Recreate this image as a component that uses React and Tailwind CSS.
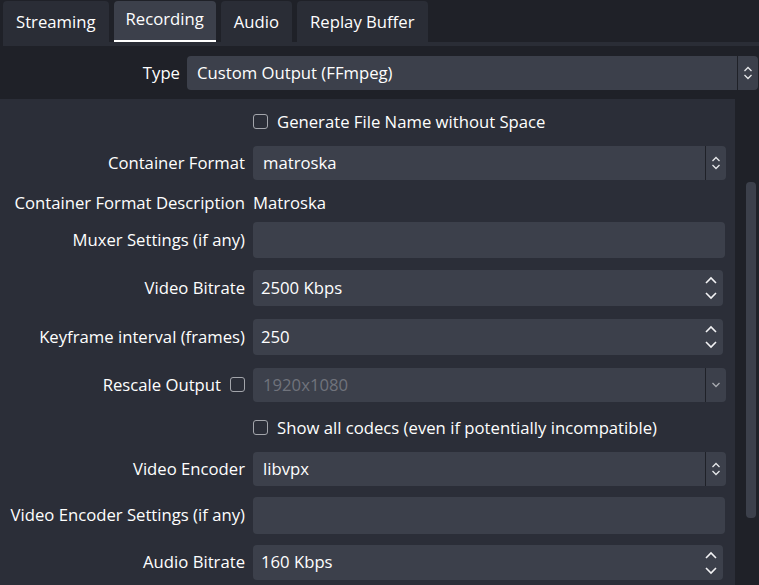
import React from 'react';

const FONT = { fontFamily: '"Open Sans", "Noto Sans", "Liberation Sans", sans-serif' };

// small up/down chevrons used in combo boxes
const ComboArrows = () => (
  <svg width="10" height="16" viewBox="0 0 10 16" fill="none" stroke="#e6e7ea" strokeWidth="1.3">
    <path d="M1.5 6 L5 2.5 L8.5 6" />
    <path d="M1.5 10 L5 13.5 L8.5 10" />
  </svg>
);

const SpinArrows = () => (
  <svg width="14" height="26" viewBox="0 0 14 26" fill="none" stroke="#f2f2f4" strokeWidth="1.6">
    <path d="M2 8 L7 3 L12 8" />
    <path d="M2 18 L7 23 L12 18" />
  </svg>
);

const DownArrow = () => (
  <svg width="10" height="8" viewBox="0 0 10 8" fill="none" stroke="#a9abb1" strokeWidth="1.3">
    <path d="M1.5 2 L5 5.5 L8.5 2" />
  </svg>
);

const Checkbox = () => (
  <div className="w-[15px] h-[15px] rounded-[3px] border-[1.5px] border-[#a3a5ab] shrink-0" />
);

const Combo = ({ value, disabled, single, w = 'w-[473px]', h = 'h-[34px]' }) => (
  <div className={`${w} ${h} flex rounded-[4px] bg-[#3c404b]`}>
    <div className={`flex-1 flex items-center pl-[10px] ${disabled ? 'text-[#70737c]' : ''}`}>{value}</div>
    <div className="w-[1px] bg-[#1f2128]" />
    <div className="w-[20px] flex items-center justify-center">
      {single ? <DownArrow /> : <ComboArrows />}
    </div>
  </div>
);

const Spin = ({ value, h = 'h-[36px]' }) => (
  <div className={`w-[470px] ${h} flex items-center rounded-[4px] bg-[#3c404b]`}>
    <div className="flex-1 pl-[8px]">{value}</div>
    <div className="w-[24px] flex items-center justify-center">
      <SpinArrows />
    </div>
  </div>
);

const TextInput = ({ h = 'h-[36px]' }) => (
  <div className={`w-[472px] ${h} rounded-[4px] bg-[#3c404b]`} />
);

const Row = ({ label, children, className = '' }) => (
  <div className={`flex items-center ${className}`}>
    <div className="w-[245px] flex justify-end items-center gap-[9px] shrink-0 whitespace-nowrap">{label}</div>
    <div className="ml-[8px] flex items-center whitespace-nowrap">{children}</div>
  </div>
);

const TABS = ['Streaming', 'Recording', 'Audio', 'Replay Buffer'];

export default function App() {
  return (
    <div className="w-[759px] h-[585px] overflow-hidden bg-[#1f2128] text-[#fefefe] text-[16.7px] leading-none" style={FONT}>
      {/* tab bar */}
      <div className="flex gap-[5px] pl-[3px] pt-[1px] h-[42px]">
        {TABS.map((t) => (
          <div
            key={t}
            className={`h-[41px] flex items-center rounded-t-[4px] ${
              t === 'Recording'
                ? 'px-[12px] bg-[#3c404b] border-b-2 border-white pb-[2px]'
                : 'px-[13px] bg-[#2a2d36] pt-[2px]'
            }`}
          >
            {t}
          </div>
        ))}
      </div>
      <div className="ml-[3px] h-[4px] bg-[#2a2d36]" />

      {/* output type */}
      <div className="flex items-center h-[53px] pt-[1px]">
        <div className="w-[180px] flex justify-end">Type</div>
        <div className="ml-[7px]">
          <Combo value="Custom Output (FFmpeg)" w="w-[571px]" />
        </div>
      </div>

      {/* scroll area */}
      <div className="flex h-[486px]">
        <div className="w-[735px] bg-[#2b2e38] flex flex-col pt-[8px]">
          <Row label={null} className="h-[30px]">
            <div className="flex items-center gap-[9px]">
              <Checkbox />
              <span>Generate File Name without Space</span>
            </div>
          </Row>
          <Row label="Container Format" className="mt-[9px]">
            <Combo value="matroska" />
          </Row>
          <Row label="Container Format Description" className="mt-[9px] h-[28px]">
            <span>Matroska</span>
          </Row>
          <Row label="Muxer Settings (if any)" className="mt-[5px]">
            <TextInput />
          </Row>
          <Row label="Video Bitrate" className="mt-[12px]">
            <Spin value="2500 Kbps" />
          </Row>
          <Row label="Keyframe interval (frames)" className="mt-[13px]">
            <Spin value="250" />
          </Row>
          <Row
            label={
              <>
                <span>Rescale Output</span>
                <Checkbox />
              </>
            }
            className="mt-[13px]"
          >
            <Combo value="1920x1080" disabled single />
          </Row>
          <Row label={null} className="mt-[12px] h-[28px]">
            <div className="flex items-center gap-[9px]">
              <Checkbox />
              <span>Show all codecs (even if potentially incompatible)</span>
            </div>
          </Row>
          <Row label="Video Encoder" className="mt-[10px]">
            <Combo value="libvpx" />
          </Row>
          <Row label="Video Encoder Settings (if any)" className="mt-[11px]">
            <TextInput h="h-[37px]" />
          </Row>
          <Row label="Audio Bitrate" className="mt-[11px]">
            <Spin value="160 Kbps" h="h-[35px]" />
          </Row>
        </div>
        {/* scrollbar */}
        <div className="w-[24px] pl-[11px] pt-[83px]">
          <div className="w-[10px] h-[336px] rounded-[4px] bg-[#3c404b]" />
        </div>
      </div>
    </div>
  );
}
